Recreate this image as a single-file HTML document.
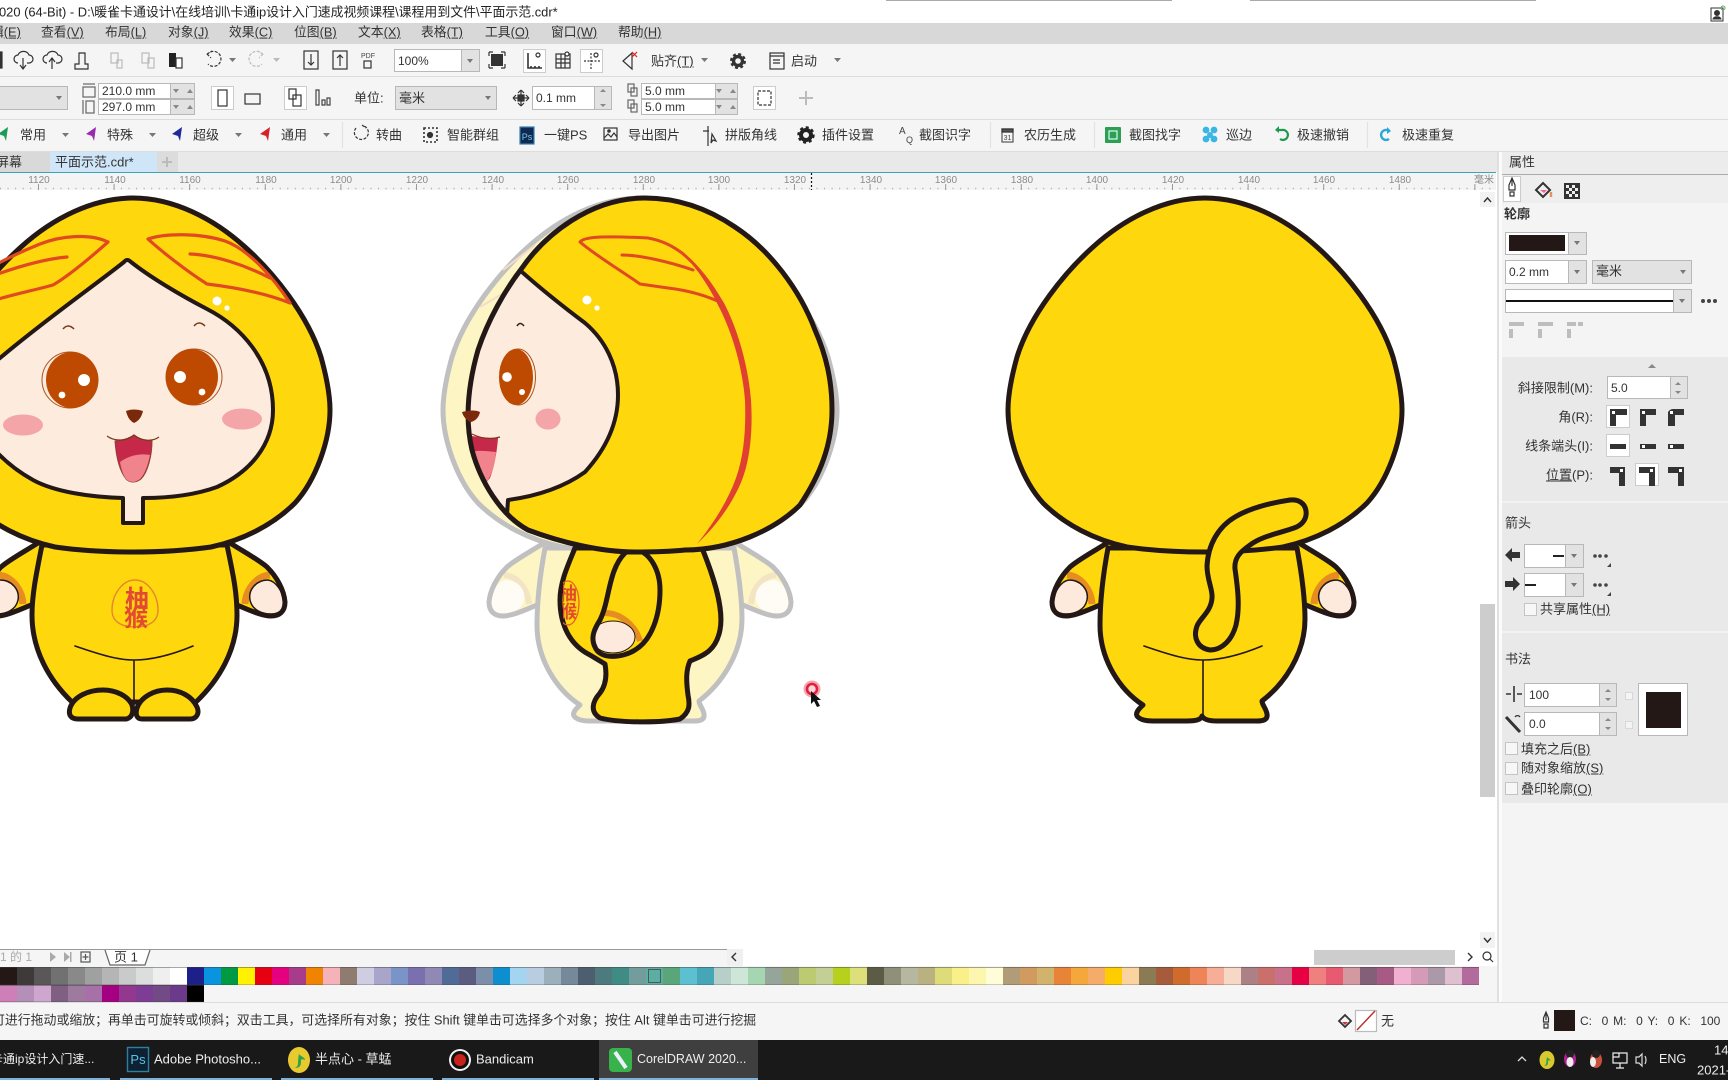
<!DOCTYPE html>
<html lang="zh"><head><meta charset="utf-8"><title>CorelDRAW 2020</title>
<style>
html,body{margin:0;padding:0;background:#fff}
body{position:relative;width:1728px;height:1080px;overflow:hidden;font-family:"Liberation Sans","Noto Sans CJK SC",sans-serif;color:#333}
.a{position:absolute}
.t{position:absolute;white-space:nowrap;transform:translateY(-50%);font-size:13px;line-height:1;color:#333}
.in{position:absolute;background:#fff;border:1px solid #b8b8b8;box-sizing:border-box}
.g{position:absolute;background:#e2e2e2;border:1px solid #b8b8b8;box-sizing:border-box}
.ar{position:absolute;width:0;height:0;border-left:3.5px solid transparent;border-right:3.5px solid transparent;border-top:4px solid #777}
.w{color:#eee;font-size:13px}
.pal{position:absolute;display:flex;left:0;height:18px;box-sizing:border-box}
.pal i{display:block;width:17px;height:100%;flex:none;box-shadow:inset 0 1px 0 rgba(60,60,60,.45),inset 0 -1px 0 rgba(60,60,60,.25)}
.line{position:absolute;background:#dcdcdc}
.cb{position:absolute;width:13px;height:13px;background:#f7f7f7;border:1px solid #c4c4c4;box-sizing:border-box}
u{text-decoration:underline}
</style></head><body>

<!-- backgrounds -->
<div class="a" style="left:0;top:0;width:1728px;height:23px;background:#fff"></div>
<div class="a" style="left:886px;top:0;width:286px;height:1px;background:#aaa"></div>
<div class="a" style="left:1250px;top:0;width:286px;height:1px;background:#aaa"></div>
<div class="a" style="left:0;top:23px;width:1728px;height:21px;background:#d8d8d8"></div>
<div class="a" style="left:0;top:44px;width:1728px;height:108px;background:#f5f5f5"></div>
<div class="line" style="left:0;top:76px;width:1728px;height:1px"></div>
<div class="line" style="left:0;top:119px;width:1728px;height:1px"></div>
<div class="line" style="left:0;top:151px;width:1728px;height:1px"></div>
<div class="a" style="left:0;top:152px;width:1498px;height:20px;background:#e9e9e9"></div>
<div class="a" style="left:0;top:152px;width:50px;height:20px;background:#d9d9d9"></div>
<div class="a" style="left:50px;top:152px;width:107px;height:20px;background:#cfe5f8"></div>
<div class="a" style="left:157px;top:152px;width:21px;height:20px;background:#dcdcdc"></div>
<div class="a" style="left:0;top:172px;width:1496px;height:1px;background:#3fa3b8"></div>
<div class="a" style="left:0;top:173px;width:1496px;height:17px;background:#f4f4f4"></div>
<div class="a" style="left:0;top:190px;width:1498px;height:760px;background:#fff"></div>

<!-- artwork -->
<svg class="a" style="left:0;top:0" width="1728" height="1080" viewBox="0 0 1728 1080">
<defs>
<path id="hd" d="M0,198 C40,198 80,218 112,247 C140,272 175,315 188,357 C193,375 197,393 197,410 C197,440 183,480 162,503 C140,525 110,540 78,547 C50,551 25,552 0,552 C-25,552 -50,551 -78,547 C-110,540 -140,525 -162,503 C-183,480 -197,440 -197,410 C-197,393 -193,375 -188,357 C-175,315 -140,272 -112,247 C-80,218 -40,198 0,198Z"/>
<path id="arm" d="M96,543 C112,553 125,560 133,567 C143,577 150,590 151,602 C151,612 145,616 137,616 C128,616 115,610 103,605"/>
<path id="armf" d="M90,538 L96,543 C112,553 125,560 133,567 C143,577 150,590 151,602 C151,612 145,616 137,616 C128,616 115,610 103,605 L80,600Z"/>
<path id="hand" d="M116,600 C114,590 122,580 134,580 C142,581 149,592 150,602 C150,611 144,614 137,614 C128,614 118,610 116,600Z"/>
<path id="cuff" d="M136,575 C122,576 112,590 111,604"/>
<path id="bback" d="M-95,548 C-100,575 -103,600 -103,625 C-103,660 -83,690 -60,705 C-63,708 -68,712 -66,716 C-63,720 -56,721 -50,721 L-16,721 C-8,721 -2,720 -1,716 C1,720 8,721 14,721 L54,721 C60,721 65,720 64,714 C63,708 59,705 59,701 C80,685 102,655 102,619 C102,595 98,570 94,548Z"/>
<clipPath id="cl1"><path d="M635,552 L528,530 C500,515 480,480 472,450 C465,420 468,385 478,350 C488,320 505,290 522,268 L640,268Z"/></clipPath>
<clipPath id="cl2"><rect x="563" y="570" width="30" height="70"/></clipPath>
<clipPath id="cl3"><path d="M637,550 C650,553 660,570 660,590 C660,615 652,640 635,650 C622,658 600,660 595,647 C590,637 595,628 600,620 C610,600 608,570 625,553Z"/></clipPath>
</defs>

<!-- FRONT -->
<g stroke="#231815" stroke-width="5" fill="#ffd70d" stroke-linejoin="round" stroke-linecap="round">
 <g transform="translate(134,0)">
  <g><use href="#armf" stroke="none"/><use href="#cuff" fill="none" stroke="#e68d22" stroke-width="7" stroke-linecap="butt"/><use href="#hand" fill="#fdeadd" stroke-width="1.5"/><use href="#arm" fill="none"/></g>
  <g transform="scale(-1,1)"><use href="#armf" stroke="none"/><use href="#cuff" fill="none" stroke="#e68d22" stroke-width="7" stroke-linecap="butt"/><use href="#hand" fill="#fdeadd" stroke-width="1.5"/><use href="#arm" fill="none"/></g>
  <path d="M-92,545 C-98,575 -102,595 -102,615 C-102,650 -85,680 -62,702 L62,702 C85,680 103,650 103,615 C103,590 98,570 93,545Z"/>
  <path d="M-59,646 C-30,656 -15,660 0,660 C15,660 35,656 59,646 M0,660 L0,705" fill="none" stroke-width="1.6"/>
  <path d="M-64,708 C-60,696 -45,690 -31,690 C-18,690 -6,696 -2,705 C0,712 -2,718 -8,719 L-56,719 C-63,719 -66,715 -64,708Z"/>
  <path d="M3,708 C7,697 20,690 33,690 C46,690 58,696 63,707 C66,714 62,719 56,719 L8,719 C3,719 1,715 3,708Z"/>
 </g>
 <use href="#hd" transform="translate(133,0)"/>
 <path d="M124,262 Q127,258 131,262 C150,277 180,295 207,309 C240,326 273,360 273,410 C273,445 250,472 217,487 C195,495 170,498 143,498 L143,523 L123,523 L123,498 C90,497 55,492 33,480 C15,470 -5,455 -20,430 C-30,405 -30,385 -20,375 C-10,365 -5,362 0,358 C45,320 95,285 124,262Z" fill="#fdebde" stroke-width="4"/>
</g>
<g fill="none" stroke="#e04a20" stroke-width="3.2" stroke-linejoin="round" stroke-linecap="round">
 <path d="M148,239 C165,233 200,233 225,241 C250,250 275,280 290,303 C270,295 240,288 207,284 C185,270 160,250 148,239Z"/>
 <path d="M190,254 C215,255 245,265 270,278"/>
 <path d="M108,242 C90,233 60,236 40,244 C25,250 10,257 -5,265 M108,242 C90,258 70,275 53,285 C35,290 15,294 -5,300"/>
 <path d="M67,257 C45,259 20,266 -5,275"/>
</g>
<circle cx="217" cy="301" r="4.5" fill="#fff"/><circle cx="227" cy="308" r="2.6" fill="#fff"/>
<ellipse cx="70" cy="380" rx="28" ry="28" fill="none" stroke="#a9541e" stroke-width="1"/>
<ellipse cx="72" cy="380" rx="26" ry="28" fill="#bd4a00"/>
<circle cx="84" cy="380" r="6" fill="#fff"/><circle cx="62" cy="395" r="3.4" fill="#fff"/>
<ellipse cx="194" cy="377" rx="28" ry="28" fill="none" stroke="#a9541e" stroke-width="1"/>
<ellipse cx="192" cy="377" rx="26" ry="28" fill="#bd4a00"/>
<circle cx="180" cy="377" r="6" fill="#fff"/><circle cx="202" cy="392" r="3.4" fill="#fff"/>
<ellipse cx="23" cy="425" rx="20" ry="10.5" fill="#f4a5a8"/><ellipse cx="242" cy="419" rx="20" ry="10.5" fill="#f4a5a8"/>
<path d="M63,329 Q68,323 74,329 M194,326 Q199,320 205,326" fill="none" stroke="#7a3a1a" stroke-width="1.6"/>
<path d="M126,411 Q134,408 143,411 Q141,420 134,423 Q128,420 126,411Z" fill="#7a2a0a"/>
<path d="M115,441 C125,440 129,438 134,435 C138,438 144,441 152,441 C152,455 148,472 141,479 C136,483 130,483 126,479 C119,470 116,455 115,441Z" fill="#c6284a" stroke="#8c4030" stroke-width="1"/>
<path d="M120,462 C128,456 140,453 150,455 C148,465 145,473 141,478 C136,483 130,483 126,479 C123,475 121,468 120,462Z" fill="#f0838b"/>
<path d="M107,436 C115,442 127,441 134,435 C141,441 152,442 159,437" fill="none" stroke="#7a3a1a" stroke-width="1.2"/>
<path d="M135,580 C148,580 158,595 158,610 C158,622 148,627 135,627 C122,627 112,622 112,610 C112,595 122,580 135,580Z" fill="none" stroke="#e8862c" stroke-width="1.4"/>
<text x="137" y="607" text-anchor="middle" font-size="24" font-weight="700" fill="#e24a32" font-family="'Noto Sans CJK SC',sans-serif">柚</text>
<text x="136" y="626" text-anchor="middle" font-size="24" font-weight="700" fill="#e24a32" font-family="'Noto Sans CJK SC',sans-serif">猴</text>

<!-- SIDE: ghost -->
<g stroke="#c0c0c0" stroke-width="5" fill="#fdf5c4" stroke-linejoin="round" stroke-linecap="round">
 <g transform="translate(640,0)">
  <g><use href="#armf" stroke="none"/><use href="#cuff" fill="none" stroke="#f3e5c4" stroke-width="6" stroke-linecap="butt"/><use href="#hand" fill="#fffbf5" stroke="none"/><use href="#arm" fill="none"/></g>
  <g transform="scale(-1,1)"><use href="#armf" stroke="none"/><use href="#cuff" fill="none" stroke="#f3e5c4" stroke-width="6" stroke-linecap="butt"/><use href="#hand" fill="#fffbf5" stroke="none"/><use href="#arm" fill="none"/></g>
  <use href="#bback"/>
  <use href="#hd"/>
 </g>
</g>
<path d="M480,307 L512,288 M503,270 L535,245" stroke="#f5dcc8" stroke-width="2" fill="none"/>
<!-- SIDE: main -->
<g stroke="#231815" stroke-width="5" fill="#ffd70d" stroke-linejoin="round" stroke-linecap="round">
 <path d="M575,548 C568,565 560,582 560,600 C560,625 570,645 590,655 L605,664 C607,675 606,685 600,693 C592,702 590,712 600,718 C620,723 660,723 680,719 C690,712 690,705 688,695 C686,680 686,670 690,661 C705,655 716,650 720,630 C724,610 715,580 702,548Z"/>
</g>
<g clip-path="url(#cl2)"><ellipse cx="568" cy="603" rx="11" ry="22" fill="none" stroke="#e8622c" stroke-width="1.3"/>
<text x="568" y="600" text-anchor="middle" font-size="18" font-weight="700" fill="#e24a2c" font-family="'Noto Sans CJK SC',sans-serif">柚</text>
<text x="568" y="618" text-anchor="middle" font-size="18" font-weight="700" fill="#e24a2c" font-family="'Noto Sans CJK SC',sans-serif">猴</text></g>
<path d="M637,550 C650,553 660,570 660,590 C660,615 652,640 635,650 C622,658 600,660 595,647 C590,637 595,628 600,620 C610,600 608,570 625,553 C629,550 633,550 637,550Z" fill="#ffd70d"/>
<g clip-path="url(#cl3)"><path d="M603,613 C620,612 635,625 640,641" fill="none" stroke="#e68d22" stroke-width="6"/><ellipse cx="613" cy="637" rx="22" ry="16" fill="#fdeadd" stroke="#231815" stroke-width="1"/></g>
<path d="M637,550 C650,553 660,570 660,590 C660,615 652,640 635,650 C622,658 600,660 595,647 C590,637 595,628 600,620 C610,600 608,570 625,553 C629,550 633,550 637,550Z" fill="none" stroke="#231815" stroke-width="5" stroke-linejoin="round"/>
<path d="M645,198 C680,198 710,210 735,227 C770,250 800,290 815,330 C826,355 832,380 832,410 C832,445 820,475 800,505 C775,530 730,550 685,550 C665,552 650,552 635,552 C600,552 560,542 528,530 C500,515 480,480 472,450 C465,420 468,385 478,350 C488,320 505,290 522,268 C545,235 590,198 645,198Z" fill="#ffd70d"/>
<path d="M522,272 C540,288 565,308 585,323 C605,340 618,365 618,395 C618,425 605,450 585,472 C560,490 530,497 508,500 L507,515 C500,515 480,480 472,450 C465,420 468,385 478,350 C488,320 505,290 522,272Z" fill="#fdebde"/>
<g clip-path="url(#cl1)">
 <path d="M465,435 C478,437 490,438 498,438 C497,452 494,468 490,478 L480,490 L465,470Z" fill="#c6284a"/>
 <path d="M470,452 C478,450 488,451 496,452 C495,465 492,473 488,480 L480,490 L472,470Z" fill="#f0838b"/>
</g>
<path d="M472,434 C480,438 490,440 500,437" fill="none" stroke="#7a3a1a" stroke-width="1.2"/>
<path d="M522,272 C540,288 565,308 585,323 C605,340 618,365 618,395 C618,425 605,450 585,472 C560,490 530,497 508,500 L507,515" fill="none" stroke="#231815" stroke-width="4" stroke-linejoin="round"/>
<path d="M645,198 C680,198 710,210 735,227 C770,250 800,290 815,330 C826,355 832,380 832,410 C832,445 820,475 800,505 C775,530 730,550 685,550 C665,552 650,552 635,552 C600,552 560,542 528,530 C500,515 480,480 472,450 C465,420 468,385 478,350 C488,320 505,290 522,268 C545,235 590,198 645,198Z" fill="none" stroke="#231815" stroke-width="5"/>
<g fill="none" stroke="#e04a20" stroke-linejoin="round" stroke-linecap="round">
 <path stroke-width="3" d="M580,242 C584,236 610,236 648,238 C665,241 675,248 682,253 C700,268 712,285 722,303 C705,295 685,290 668,288 L640,284 C620,270 595,255 580,242Z"/>
 <path stroke-width="3" d="M622,255 C640,255 670,262 693,270"/>
</g>
<path d="M682,253 C700,268 715,288 724,303 C738,330 748,365 751,400 C753,430 750,460 742,480 C732,505 715,527 697,544 C712,525 727,503 736,478 C744,455 746,430 745,400 C742,365 732,332 718,305 C710,288 697,268 682,253Z" fill="#e04030"/>
<circle cx="587" cy="300" r="4.5" fill="#fff"/><circle cx="597" cy="308" r="2.6" fill="#fff"/>
<ellipse cx="518" cy="377" rx="17.5" ry="28" fill="none" stroke="#a9541e" stroke-width="1"/>
<ellipse cx="516" cy="377" rx="17" ry="28" fill="#bd4a00"/>
<circle cx="507" cy="377" r="4.8" fill="#fff"/><circle cx="522" cy="392" r="3" fill="#fff"/>
<ellipse cx="548" cy="419" rx="12.5" ry="10.5" fill="#f4a5a8"/>
<path d="M517,326 Q520,321 524,326" fill="none" stroke="#3a2010" stroke-width="1.6"/>
<path d="M462,412 C470,410 476,410 480,412 C479,418 474,422 470,422 C466,420 463,416 462,412Z" fill="#7a2a0a"/>

<!-- BACK -->
<g stroke="#231815" stroke-width="5" fill="#ffd70d" stroke-linejoin="round" stroke-linecap="round">
 <g transform="translate(1203,0)">
  <g><use href="#armf" stroke="none"/><use href="#cuff" fill="none" stroke="#e68d22" stroke-width="7" stroke-linecap="butt"/><use href="#hand" fill="#fdeadd" stroke-width="1.5"/><use href="#arm" fill="none"/></g>
  <g transform="scale(-1,1)"><use href="#armf" stroke="none"/><use href="#cuff" fill="none" stroke="#e68d22" stroke-width="7" stroke-linecap="butt"/><use href="#hand" fill="#fdeadd" stroke-width="1.5"/><use href="#arm" fill="none"/></g>
  <use href="#bback"/>
  <path d="M-59,646 C-30,656 -15,660 0,660 C15,660 35,656 59,646 M0,660 L0,716" fill="none" stroke-width="1.6"/>
 </g>
 <use href="#hd" transform="translate(1205,0)"/>
 <path d="M1290,500 C1270,503 1250,508 1235,517 C1218,527 1208,545 1207,566 C1207,580 1213,590 1212,598 C1211,612 1200,618 1197,626 C1193,637 1197,648 1210,650 C1222,650 1232,640 1236,625 C1240,608 1238,590 1235,569 C1234,558 1240,552 1250,545 C1262,536 1280,533 1294,528 C1303,525 1307,518 1306,511 C1305,503 1298,499 1290,500Z"/>
</g>

<!-- cursor -->
<circle cx="812" cy="689" r="8.5" fill="#f5a5ad"/><circle cx="812" cy="689" r="5" fill="#fbd5d8" stroke="#e0203e" stroke-width="2.6"/>
<path d="M811,691 L811,704 L814,701 L817,707 L820,706 L817,700 L821,700Z" fill="#111"/>
</svg>

<!-- scrollbars / panel -->
<div class="a" style="left:1480px;top:604px;width:15px;height:193px;background:#cdcdcd"></div>
<div class="a" style="left:0;top:949px;width:727px;height:17px;background:#f5f5f5;border-top:1px solid #999;box-sizing:border-box"></div>
<div class="a" style="left:727px;top:949px;width:16px;height:17px;background:#f0f0f0"></div>
<div class="a" style="left:1314px;top:950px;width:141px;height:15px;background:#cdcdcd"></div>
<div class="a" style="left:0;top:966px;width:1498px;height:36px;background:#f5f5f5"></div>
<div class="a" style="left:1497px;top:152px;width:2px;height:850px;background:#e0e0e0"></div>
<div class="a" style="left:1499px;top:152px;width:3px;height:850px;background:#fbfbfb"></div>
<div class="a" style="left:1502px;top:152px;width:226px;height:850px;background:#f4f4f4"></div>
<div class="a" style="left:1502px;top:152px;width:226px;height:23px;background:#ececec"></div>
<div class="a" style="left:1502px;top:174px;width:226px;height:1px;background:#aaa"></div>
<div class="a" style="left:1502px;top:175px;width:226px;height:28px;background:#eeeeee"></div>
<div class="a" style="left:1502px;top:357px;width:226px;height:446px;background:#e9e9e9"></div>
<div class="line" style="left:1502px;top:501px;width:226px;height:2px;background:#f2f2f2"></div>
<div class="line" style="left:1502px;top:631px;width:226px;height:2px;background:#f2f2f2"></div>

<!-- palette -->
<div class="pal" style="top:967px"><i style="background:#231815"></i><i style="background:#3e3a39"></i><i style="background:#595757"></i><i style="background:#727171"></i><i style="background:#898989"></i><i style="background:#9fa0a0"></i><i style="background:#b5b5b6"></i><i style="background:#c9caca"></i><i style="background:#dcdddd"></i><i style="background:#efefef"></i><i style="background:#fff"></i><i style="background:#1d2088"></i><i style="background:#0a94e0"></i><i style="background:#009944"></i><i style="background:#fff100"></i><i style="background:#e60012"></i><i style="background:#e4007f"></i><i style="background:#a73d8a"></i><i style="background:#f08300"></i><i style="background:#f5b2b8"></i><i style="background:#8f7b70"></i><i style="background:#cfcde2"></i><i style="background:#a9a4c9"></i><i style="background:#7b94c8"></i><i style="background:#7a70b0"></i><i style="background:#9089b5"></i><i style="background:#4f6b96"></i><i style="background:#5b5c80"></i><i style="background:#7b8eaa"></i><i style="background:#0d8ecf"></i><i style="background:#a3d4f0"></i><i style="background:#b8cde0"></i><i style="background:#9cb0bc"></i><i style="background:#75899a"></i><i style="background:#4d5e6e"></i><i style="background:#4d7a7c"></i><i style="background:#3f8c85"></i><i style="background:#739c9c"></i><i style="background:#5baea4;outline:1px solid #555;outline-offset:-3px"></i><i style="background:#5aa67b"></i><i style="background:#5cc0d0"></i><i style="background:#46a6b8"></i><i style="background:#b6cfc8"></i><i style="background:#cde6d7"></i><i style="background:#a5d6b1"></i><i style="background:#95a59a"></i><i style="background:#9ba57a"></i><i style="background:#bccb71"></i><i style="background:#c3cf95"></i><i style="background:#b5d11d"></i><i style="background:#dde07a"></i><i style="background:#5c5c46"></i><i style="background:#8f9079"></i><i style="background:#b5b89e"></i><i style="background:#b9b17f"></i><i style="background:#dedb79"></i><i style="background:#f9f08a"></i><i style="background:#fdf6ae"></i><i style="background:#fffcd8"></i><i style="background:#b09d78"></i><i style="background:#d19a60"></i><i style="background:#d1b36c"></i><i style="background:#e98337"></i><i style="background:#f6a73b"></i><i style="background:#f5ac68"></i><i style="background:#ffcc00"></i><i style="background:#fad39f"></i><i style="background:#8c7a54"></i><i style="background:#a65c3c"></i><i style="background:#cf6b2c"></i><i style="background:#ef8458"></i><i style="background:#f6ae96"></i><i style="background:#f7d8c7"></i><i style="background:#ab8186"></i><i style="background:#c9706c"></i><i style="background:#c9708a"></i><i style="background:#e60044"></i><i style="background:#f08080"></i><i style="background:#e85a70"></i><i style="background:#d29aa0"></i><i style="background:#835f78"></i><i style="background:#a65a84"></i><i style="background:#f2b0d0"></i><i style="background:#d49ab8"></i><i style="background:#ab98a8"></i><i style="background:#dec0d0"></i><i style="background:#b36a9c"></i></div>
<div class="pal" style="top:985px;height:17px"><i style="background:#cf7fb8"></i><i style="background:#b490b8"></i><i style="background:#cfa6cd"></i><i style="background:#7f6083"></i><i style="background:#9e7a9e"></i><i style="background:#a870a8"></i><i style="background:#a50082"></i><i style="background:#93378f"></i><i style="background:#7d3c96"></i><i style="background:#724a85"></i><i style="background:#6c3a8a"></i><i style="background:#000"></i></div>

<!-- status + taskbar -->
<div class="a" style="left:0;top:1002px;width:1728px;height:38px;background:#f5f5f5;border-top:1px solid #dcdcdc;box-sizing:border-box"></div>
<div class="a" style="left:0;top:1040px;width:1728px;height:40px;background:#191919"></div>
<div class="a" style="left:599px;top:1040px;width:159px;height:40px;background:#3f3f3f"></div>
<div class="a" style="left:0;top:1078px;width:110px;height:2px;background:#7db2dc"></div>
<div class="a" style="left:120px;top:1078px;width:152px;height:2px;background:#7db2dc"></div>
<div class="a" style="left:281px;top:1078px;width:152px;height:2px;background:#7db2dc"></div>
<div class="a" style="left:442px;top:1078px;width:152px;height:2px;background:#7db2dc"></div>
<div class="a" style="left:599px;top:1078px;width:159px;height:2px;background:#7db2dc"></div>

<!-- toolbar controls -->
<div class="in" style="left:394px;top:49px;width:86px;height:23px"></div><div class="g" style="left:461px;top:49px;width:19px;height:23px"></div><i class="ar" style="left:467px;top:59px"></i>
<div class="g" style="left:-4px;top:86px;width:72px;height:24px"></div><i class="ar" style="left:56px;top:96px"></i>
<div class="in" style="left:98px;top:83px;width:97px;height:16px"></div><div class="in" style="left:98px;top:99px;width:97px;height:16px"></div>
<div class="g" style="left:170px;top:83px;width:25px;height:16px"></div><div class="g" style="left:170px;top:99px;width:25px;height:16px"></div>
<div class="in" style="left:211px;top:86px;width:23px;height:24px;border-color:#ccc"></div>
<div class="in" style="left:284px;top:86px;width:23px;height:24px;border-color:#ccc"></div>
<div class="g" style="left:395px;top:86px;width:102px;height:24px"></div><i class="ar" style="left:485px;top:96px"></i>
<div class="in" style="left:532px;top:86px;width:80px;height:24px"></div><div class="g" style="left:594px;top:86px;width:18px;height:24px"></div>
<div class="in" style="left:641px;top:83px;width:97px;height:16px"></div><div class="in" style="left:641px;top:99px;width:97px;height:16px"></div>
<div class="g" style="left:715px;top:83px;width:23px;height:16px"></div><div class="g" style="left:715px;top:99px;width:23px;height:16px"></div>
<div class="in" style="left:753px;top:86px;width:23px;height:24px;border-color:#ccc"></div>
<div class="in" style="left:523px;top:49px;width:23px;height:24px;border-color:#ccc"></div>
<div class="in" style="left:580px;top:49px;width:23px;height:24px;border-color:#ccc"></div>

<!-- panel controls -->
<div class="in" style="left:1503px;top:176px;width:18px;height:26px;border-color:#ccc"></div>
<div class="in" style="left:1505px;top:232px;width:82px;height:23px"></div><div class="a" style="left:1509px;top:235px;width:56px;height:16px;background:#231815"></div><div class="g" style="left:1568px;top:232px;width:19px;height:23px"></div><i class="ar" style="left:1574px;top:241px"></i>
<div class="in" style="left:1505px;top:260px;width:82px;height:24px"></div><div class="g" style="left:1568px;top:260px;width:19px;height:24px"></div><i class="ar" style="left:1574px;top:270px"></i>
<div class="g" style="left:1592px;top:260px;width:100px;height:24px"></div><i class="ar" style="left:1680px;top:270px"></i>
<div class="in" style="left:1505px;top:289px;width:187px;height:24px"></div><div class="a" style="left:1506px;top:300px;width:167px;height:1.5px;background:#111"></div><div class="g" style="left:1673px;top:289px;width:19px;height:24px"></div><i class="ar" style="left:1679px;top:299px"></i>
<div class="in" style="left:1607px;top:376px;width:81px;height:23px"></div><div class="g" style="left:1670px;top:376px;width:18px;height:23px"></div>
<div class="in" style="left:1606px;top:405px;width:24px;height:23px;border-color:#ccc"></div>
<div class="in" style="left:1606px;top:434px;width:24px;height:23px;border-color:#ccc"></div>
<div class="in" style="left:1635px;top:463px;width:24px;height:23px;border-color:#ccc"></div>
<div class="in" style="left:1524px;top:544px;width:60px;height:24px"></div><div class="g" style="left:1565px;top:544px;width:19px;height:24px"></div><i class="ar" style="left:1571px;top:554px"></i>
<div class="in" style="left:1524px;top:573px;width:60px;height:24px"></div><div class="g" style="left:1565px;top:573px;width:19px;height:24px"></div><i class="ar" style="left:1571px;top:583px"></i>
<div class="a" style="left:1553px;top:555px;width:11px;height:2px;background:#222"></div><div class="a" style="left:1525px;top:584px;width:11px;height:2px;background:#222"></div>
<div class="cb" style="left:1524px;top:603px"></div>
<div class="in" style="left:1524px;top:683px;width:93px;height:24px"></div><div class="g" style="left:1599px;top:683px;width:18px;height:24px"></div>
<div class="in" style="left:1524px;top:712px;width:93px;height:24px"></div><div class="g" style="left:1599px;top:712px;width:18px;height:24px"></div>
<div class="a" style="left:1625px;top:692px;width:6px;height:6px;background:#f4f4f4;border:1px solid #d8d8d8"></div>
<div class="a" style="left:1625px;top:721px;width:6px;height:6px;background:#f4f4f4;border:1px solid #d8d8d8"></div>
<div class="in" style="left:1638px;top:683px;width:50px;height:53px"></div><div class="a" style="left:1646px;top:692px;width:35px;height:36px;background:#231815"></div>
<div class="cb" style="left:1505px;top:742px"></div><div class="cb" style="left:1505px;top:762px"></div><div class="cb" style="left:1505px;top:782px"></div>

<!-- icons + ruler -->
<svg class="a" style="left:0;top:0" width="1728" height="1080" viewBox="0 0 1728 1080" fill="none" stroke="#333" stroke-width="1.2" font-family="'Liberation Sans',sans-serif">
<!-- ruler -->
<line x1="0" y1="188.500" x2="1496" y2="188.500" stroke="#aaa" stroke-width="1.500" stroke-dasharray="1 6.56"/>
<line x1="0.5" y1="187" x2="1496" y2="187" stroke="#999" stroke-width="6" stroke-dasharray="1 74.6" stroke-dashoffset="-37.5"/>
<line x1="811.5" y1="173" x2="811.5" y2="190" stroke="#111" stroke-dasharray="2 2"/>
<g fill="#8a8a8a" stroke="none" font-size="10" text-anchor="middle">
<text x="39" y="183">1120</text><text x="115" y="183">1140</text><text x="190" y="183">1160</text><text x="266" y="183">1180</text><text x="341" y="183">1200</text><text x="417" y="183">1220</text><text x="493" y="183">1240</text><text x="568" y="183">1260</text><text x="644" y="183">1280</text><text x="719" y="183">1300</text><text x="795" y="183">1320</text><text x="871" y="183">1340</text><text x="946" y="183">1360</text><text x="1022" y="183">1380</text><text x="1097" y="183">1400</text><text x="1173" y="183">1420</text><text x="1249" y="183">1440</text><text x="1324" y="183">1460</text><text x="1400" y="183">1480</text>
<text x="1484" y="183" font-family="'Noto Sans CJK SC',sans-serif">毫米</text>
</g>
<!-- toolbar 1 -->
<path d="M0,52h2v16h-2z" fill="#333"/>
<g><path d="M18,63a4,4 0 0 1 0,-8a6,6 0 0 1 11,0a4,4 0 0 1 0,8h-2M23,58v11M20,65l3,4 3,-4"/></g>
<path d="M47,63a4,4 0 0 1 0,-8a6,6 0 0 1 11,0a4,4 0 0 1 0,8h-2M52,69v-11M49,62l3,-4 3,4"/>
<path d="M75,69h13v-5h-3v-11h-6v11h-4z"/>
<g stroke="#bbb"><rect x="111" y="53" width="7" height="10"/><rect x="117" y="60" width="5" height="8"/><rect x="142" y="53" width="7" height="10"/><rect x="148" y="58" width="6" height="10"/></g>
<rect x="169" y="53" width="7" height="14" fill="#222" stroke="none"/><rect x="176" y="58" width="6" height="10" fill="#fff"/>
<path d="M207,54l5,-3 M207,54l4,4 M207,55a7.5,7.5 0 1 1 1,9" stroke-dasharray="3 1.5"/><path d="M229,58h7l-3.5,4z" fill="#777" stroke="none"/>
<path d="M263,54l-5,-3 M263,54l-4,4 M263,55a7.5,7.5 0 1 0 -1,9" stroke="#bbb" stroke-dasharray="3 1.5"/><path d="M273,58h7l-3.5,4z" fill="#bbb" stroke="none"/>
<rect x="304" y="51" width="14" height="18"/><path d="M311,54v11M308,62l3,3 3,-3"/>
<rect x="333" y="51" width="14" height="18"/><path d="M340,66v-11M337,58l3,-3 3,3"/>
<text x="368" y="58" font-size="7" fill="#444" stroke="none" text-anchor="middle">PDF</text><rect x="364" y="61" width="7" height="7"/>
<path d="M489,52h4M489,52v4M505,52h-4M505,52v4M489,68h4M489,68v-4M505,68h-4M505,68v-4"/><rect x="491" y="54" width="12" height="12" fill="#333" stroke="none"/>
<path d="M528,53v15h14M531,68v-2M535,68v-2M539,68v-2" stroke-width="1.6"/><circle cx="538" cy="55" r="2"/>
<rect x="556" y="54" width="14" height="14"/><path d="M556,59h14M556,63h14M561,54v14M565,54v14"/><circle cx="567" cy="54" r="2" fill="#fff"/>
<path d="M591,53v16M584,61h16" stroke-dasharray="2 1.5"/><circle cx="596" cy="55" r="2"/>
<path d="M623,61l9,-8v16z"/><path d="M632,52l5,5M637,52l-5,5" stroke="#d22"/>
<path d="M701,58h7l-3.5,4z" fill="#777" stroke="none"/>
<circle cx="738" cy="61" r="4.5" stroke-width="3.4"/><circle cx="738" cy="61" r="7" stroke-width="2" stroke-dasharray="3 2.5"/>
<rect x="770" y="53" width="14" height="16"/><path d="M770,56h14M773,60h7M773,63h7"/>
<path d="M834,58h7l-3.5,4z" fill="#777" stroke="none"/>
<!-- toolbar 2 -->
<rect x="83" y="87" width="12" height="10" stroke="#666"/><path d="M83,84h12" stroke="#666"/><rect x="86" y="101" width="8" height="12" stroke="#666"/><path d="M83,100v14" stroke="#666"/>
<g fill="#888" stroke="none"><path d="M173,89h6l-3,4zM187,93h6l-3,-4zM173,105h6l-3,4zM187,109h6l-3,-4z"/><path d="M716,89h6l-3,4zM730,93h6l-3,-4zM716,105h6l-3,4zM730,109h6l-3,-4z"/><path d="M600,92h6l-3,-3zM600,104h6l-3,3z"/></g>
<rect x="218" y="90" width="9" height="16"/><rect x="245" y="94" width="15" height="10"/>
<rect x="289" y="89" width="7" height="10"/><rect x="293" y="95" width="8" height="11"/>
<path d="M316,90v15h3v-15zM322,100h3v5h-3zM327,98h3v7h-3z" stroke="#444"/>
<path d="M521,90v16M513,98h16M521,90l-3,3M521,90l3,3M521,106l-3,-3M521,106l3,-3M513,98l3,-3M513,98l3,3M529,98l-3,-3M529,98l-3,3"/><rect x="518" y="95" width="6" height="6" fill="#333"/>
<rect x="628" y="84" width="6" height="8" stroke="#666"/><rect x="631" y="88" width="6" height="8" stroke="#666"/><rect x="628" y="100" width="6" height="8" stroke="#666"/><rect x="631" y="104" width="6" height="8" stroke="#666"/>
<rect x="758" y="91" width="13" height="14" stroke-dasharray="3 1.5"/>
<path d="M806,91v14M799,98h14" stroke="#bbb" stroke-width="2"/>
<!-- toolbar 3 -->
<path d="M-2,134l10,-7 -2,14 -2,-5z" fill="#1a9b56" stroke="none"/><path d="M62,133h7l-3.5,4z" fill="#777" stroke="none"/>
<path d="M86,134l10,-7 -2,14 -2,-5z" fill="#9a2ab0" stroke="none"/><path d="M149,133h7l-3.5,4z" fill="#777" stroke="none"/>
<path d="M172,134l10,-7 -2,14 -2,-5z" fill="#1c2a9a" stroke="none"/><path d="M235,133h7l-3.5,4z" fill="#777" stroke="none"/>
<path d="M260,134l10,-7 -2,14 -2,-5z" fill="#d8202c" stroke="none"/><path d="M323,133h7l-3.5,4z" fill="#777" stroke="none"/>
<path d="M342.5,122v26M990.5,122v26M1094.5,122v26M1367.5,122v26" stroke="#e2e2e2"/>
<path d="M356,128a7,7 0 1 0 8,-2M362,125l4,3" stroke-dasharray="3 1.5"/>
<rect x="424" y="128" width="13" height="14" stroke-dasharray="2 2" stroke-width="1.6"/><circle cx="430" cy="135" r="2.5" fill="#333"/>
<rect x="520" y="127" width="14" height="17" fill="#0e2a50" stroke="#3a7fb0"/><text x="527" y="140" font-size="9" fill="#7fc8ee" stroke="none" text-anchor="middle">Ps</text>
<rect x="604" y="128" width="13" height="12"/><path d="M604,138l4,-4 3,3 3,-4 3,4"/><circle cx="609" cy="131" r="1.2" fill="#333"/>
<path d="M708,126v20M703,131h6M712,134l4,7-3,-1-2,3z"/>
<circle cx="806" cy="135" r="5" stroke="#222" stroke-width="4"/><circle cx="806" cy="135" r="7.5" stroke="#222" stroke-width="2.4" stroke-dasharray="3 2.8"/>
<text x="899" y="134" font-size="10" fill="#444" stroke="none">A</text><text x="906" y="143" font-size="9" fill="#444" stroke="none">Q</text>
<rect x="1002" y="129" width="11" height="13" stroke="#555"/><path d="M1002,129h11v3h-11z" fill="#555"/><text x="1007.500" y="140" font-size="7" fill="#444" stroke="none" text-anchor="middle">31</text>
<rect x="1105" y="127" width="16" height="16" rx="1" fill="#2f9e55" stroke="none"/><rect x="1109" y="131" width="8" height="8" stroke="#cfe"/>
<g fill="#39b6e4" stroke="none"><circle cx="1206" cy="130" r="3.4"/><circle cx="1214" cy="130" r="3.4"/><circle cx="1206" cy="139" r="3.4"/><circle cx="1214" cy="139" r="3.4"/><circle cx="1210" cy="135" r="3"/></g>
<path d="M1278,130h4a5,5 0 1 1 -2,9" stroke="#1c9b50" stroke-width="2.2"/><path d="M1279,126v7l-4,-3z" fill="#1c9b50" stroke="none"/>
<path d="M1389,130h-2a5,5 0 1 0 2,9" stroke="#2aa6d8" stroke-width="2.4"/><path d="M1387,127v7l4,-3z" fill="#2aa6d8" stroke="none"/>
<!-- tab plus -->
<path d="M167,157v10M162,162h10" stroke="#bbb" stroke-width="2"/>
<!-- scroll arrows -->
<rect x="1480" y="192" width="15" height="15" fill="#f2f2f2" stroke="none"/><path d="M1484,202l3.500,-4 3.500,4" stroke-width="1.400"/>
<rect x="1480" y="932" width="15" height="16" fill="#f2f2f2" stroke="none"/><path d="M1484,938l3.500,4 3.500,-4" stroke-width="1.400"/>
<path d="M736,953l-4,4 4,4M1468,953l4,4 -4,4" stroke-width="1.400"/>
<circle cx="1487" cy="956" r="4"/><path d="M1490,959l3,3"/>
<!-- page nav -->
<g fill="#aaa" stroke="none"><path d="M50,952l6,5 -6,5zM64,952l6,5 -6,5z"/><rect x="70" y="952" width="1.500" height="10"/></g>
<rect x="81" y="952" width="9" height="10" stroke="#555"/><path d="M85.500,954v6M82.500,957h6" stroke="#555"/>
<path d="M105,950l5,15h35l5,-15" stroke="#666" fill="#fff"/>
<!-- panel icons -->
<path d="M1512,178l3,7v5h-6v-5zM1512,178v8M1510,192h4v4h-4z"/>
<path d="M1543,183l7,7-7,7-7,-7z" stroke-width="2"/><path d="M1540,190h7l-3,3z" fill="#e69" stroke="none"/><path d="M1551,192v5" stroke="#e8905a" stroke-width="2.4"/>
<path d="M1564,183h16v16h-16z" fill="#333" stroke="none"/><g fill="#eee" stroke="none"><rect x="1566" y="185" width="3" height="3"/><rect x="1572" y="185" width="3" height="3"/><rect x="1569" y="188" width="3" height="3"/><rect x="1575" y="188" width="3" height="3"/><rect x="1566" y="191" width="3" height="3"/><rect x="1572" y="191" width="3" height="3"/><rect x="1569" y="194" width="3" height="3"/><rect x="1575" y="194" width="3" height="3"/></g>
<g fill="#bdbdbd" stroke="none"><rect x="1509" y="322" width="15" height="4"/><rect x="1509" y="329" width="4" height="9"/><rect x="1538" y="322" width="15" height="4"/><rect x="1538" y="329" width="4" height="9"/><rect x="1567" y="322" width="9" height="4"/><rect x="1578" y="322" width="5" height="4"/><rect x="1567" y="329" width="4" height="9"/></g>
<g fill="#444" stroke="none"><circle cx="1703" cy="301" r="2"/><circle cx="1709" cy="301" r="2"/><circle cx="1715" cy="301" r="2"/></g>
<path d="M1648,368l4,-4 4,4z" fill="#888" stroke="none"/>
<path d="M1675,385h6l-3,-3zM1675,391h6l-3,3z" fill="#888" stroke="none"/>
<g fill="#333" stroke="none">
 <path d="M1610,409h17v6h-11v11h-6z"/><path d="M1640,409h16v6h-10v11h-6v-13z"/><path d="M1668,412q2,-3 5,-3h11v6h-9v11h-7z"/>
 <rect x="1610" y="444" width="16" height="5"/><path d="M1640,444h16v5h-16zM1668,444h16v5h-16z"/>
 <path d="M1610,467h15v19h-6v-13h-9z"/><path d="M1639,467h16v19h-6v-13h-10z"/><path d="M1668,467h16v19h-6v-13h-10z"/>
</g>
<g fill="#fff" stroke="none"><rect x="1612" y="411" width="3" height="3"/><rect x="1642" y="411" width="3" height="3"/><rect x="1670" y="411" width="3" height="3"/><rect x="1620" y="469" width="3" height="3"/><rect x="1650" y="469" width="3" height="3"/><rect x="1679" y="469" width="3" height="3"/><rect x="1642" y="445" width="3" height="3"/><rect x="1670" y="445" width="3" height="3"/></g>
<path d="M1505,555l7,-7v4h8v6h-8v4z" fill="#333" stroke="none"/><path d="M1520,584l-7,-7v4h-8v6h8v4z" fill="#333" stroke="none"/>
<g fill="#444" stroke="none"><circle cx="1595" cy="556" r="1.800"/><circle cx="1600" cy="556" r="1.800"/><circle cx="1606" cy="556" r="1.800"/><circle cx="1595" cy="585" r="1.800"/><circle cx="1600" cy="585" r="1.800"/><circle cx="1606" cy="585" r="1.800"/><path d="M1611,563v4h-4zM1611,592v4h-4z"/></g>
<path d="M1514,686v16M1506,694h5M1517,694h5" stroke-width="1.600"/>
<path d="M1506,717l14,15" stroke-width="3"/><path d="M1515,717a3,3 0 0 1 5,0"/>
<path d="M1605,692h6l-3,-3zM1605,698h6l-3,3zM1605,721h6l-3,-3zM1605,727h6l-3,3z" fill="#888" stroke="none"/>
<!-- status -->
<path d="M1345,1015l6,6-6,6-6,-6z" stroke-width="1.800"/><path d="M1342,1022h6l-3,3z" fill="#c33" stroke="none"/>
<rect x="1355.500" y="1010.500" width="21" height="21" fill="#fff" stroke="#bbb"/><path d="M1357,1030l18,-19" stroke="#b33" stroke-width="1.500"/>
<path d="M1546,1012l2.500,6v4h-5v-4zM1546,1012v8M1544,1024h4v4h-4z"/><rect x="1554" y="1010" width="21" height="21" fill="#231815" stroke="none"/>
<!-- taskbar icons -->
<rect x="127.500" y="1047.500" width="21" height="24" fill="#0c2233" stroke="#2e7fa0" stroke-width="1.400"/><text x="138" y="1064" font-size="13" fill="#5bc0ea" stroke="none" text-anchor="middle">Ps</text>
<ellipse cx="299" cy="1060" rx="11" ry="13" fill="#e8c930" stroke="none"/><path d="M294,1068c6,-1 3,-6 5,-14c2,3 6,3 6,6c-2,-1 -3,-1 -4,0c0,5 0,8 -7,8z" fill="#2aa34a" stroke="none"/>
<circle cx="460" cy="1060" r="11" fill="#f2f2f2" stroke="none"/><circle cx="460" cy="1060" r="9" fill="#111" stroke="none"/><circle cx="460" cy="1060" r="6" fill="#c8221c" stroke="none"/>
<rect x="609" y="1048" width="23" height="24" rx="4" fill="#38b24a" stroke="none"/><path d="M615,1052l11,16" stroke="#eef" stroke-width="4"/>
<!-- tray -->
<path d="M1518,1061l4,-4 4,4" stroke="#ddd" stroke-width="1.300"/>
<ellipse cx="1547" cy="1060" rx="7.500" ry="9" fill="#d9c92e" stroke="none"/><path d="M1544,1066c3,-1 2,-5 3,-9 2,2 3,2 4,4-2,-1-2,-1-3,0 0,3 0,5-4,5z" fill="#2aa34a" stroke="none"/>
<ellipse cx="1570" cy="1059" rx="6" ry="8" fill="#b02090" stroke="none"/><circle cx="1570" cy="1054" r="4" fill="#222" stroke="none"/><ellipse cx="1570" cy="1062" rx="3.500" ry="5" fill="#eee" stroke="none"/>
<ellipse cx="1596" cy="1060" rx="6" ry="8" fill="#c9513a" stroke="none"/><circle cx="1596" cy="1054" r="4" fill="#222" stroke="none"/><ellipse cx="1593" cy="1062" rx="3" ry="5" fill="#eee" stroke="none"/>
<path d="M1613,1053h14v10h-14zM1620,1063v5M1616,1068h8M1613,1053h6v4h-6z" stroke="#eee"/>
<path d="M1636,1057h3l3,-3v12l-3,-3h-3zM1645,1056q2,4 0,8" stroke="#ddd"/>
</svg>

<!-- text -->
<span class="t" style="left:-1px;top:13px;font-size:12.9px;color:#222">020 (64-Bit) - D:\暖雀卡通设计\在线培训\卡通ip设计入门速成视频课程\课程用到文件\平面示范.cdr*</span>
<span class="t" style="left:-9px;top:33px;font-size:12.8px">辑<u>(E)</u></span>
<span class="t" style="left:41px;top:33px;font-size:12.8px">查看<u>(V)</u></span>
<span class="t" style="left:105px;top:33px;font-size:12.8px">布局<u>(L)</u></span>
<span class="t" style="left:168px;top:33px;font-size:12.8px">对象<u>(J)</u></span>
<span class="t" style="left:229px;top:33px;font-size:12.8px">效果<u>(C)</u></span>
<span class="t" style="left:294px;top:33px;font-size:12.8px">位图<u>(B)</u></span>
<span class="t" style="left:358px;top:33px;font-size:12.8px">文本<u>(X)</u></span>
<span class="t" style="left:421px;top:33px;font-size:12.8px">表格<u>(T)</u></span>
<span class="t" style="left:485px;top:33px;font-size:12.8px">工具<u>(O)</u></span>
<span class="t" style="left:551px;top:33px;font-size:12.8px">窗口<u>(W)</u></span>
<span class="t" style="left:618px;top:33px;font-size:12.8px">帮助<u>(H)</u></span>
<span class="t" style="left:398px;top:61px;font-size:12px">100%</span>
<span class="t" style="left:651px;top:61px">贴齐<u>(T)</u></span>
<span class="t" style="left:791px;top:61px">启动</span>
<span class="t" style="left:102px;top:91px;font-size:12px">210.0 mm</span>
<span class="t" style="left:102px;top:107px;font-size:12px">297.0 mm</span>
<span class="t" style="left:354px;top:98px">单位:</span>
<span class="t" style="left:399px;top:98px">毫米</span>
<span class="t" style="left:536px;top:98px;font-size:12px">0.1 mm</span>
<span class="t" style="left:645px;top:91px;font-size:12px">5.0 mm</span>
<span class="t" style="left:645px;top:107px;font-size:12px">5.0 mm</span>
<span class="t" style="left:20px;top:135px">常用</span><span class="t" style="left:107px;top:135px">特殊</span><span class="t" style="left:193px;top:135px">超级</span><span class="t" style="left:281px;top:135px">通用</span>
<span class="t" style="left:376px;top:135px">转曲</span><span class="t" style="left:447px;top:135px">智能群组</span><span class="t" style="left:544px;top:135px">一键PS</span><span class="t" style="left:628px;top:135px">导出图片</span><span class="t" style="left:725px;top:135px">拼版角线</span><span class="t" style="left:822px;top:135px">插件设置</span><span class="t" style="left:919px;top:135px">截图识字</span><span class="t" style="left:1024px;top:135px">农历生成</span><span class="t" style="left:1129px;top:135px">截图找字</span><span class="t" style="left:1226px;top:135px">巡边</span><span class="t" style="left:1297px;top:135px">极速撤销</span><span class="t" style="left:1402px;top:135px">极速重复</span>
<span class="t" style="left:-4px;top:162px">屏幕</span>
<span class="t" style="left:55px;top:162px">平面示范.cdr*</span>
<span class="t" style="left:1509px;top:162px">属性</span>
<span class="t" style="left:1504px;top:214px;font-weight:700">轮廓</span>
<span class="t" style="left:1509px;top:272px;font-size:12px">0.2 mm</span>
<span class="t" style="left:1596px;top:271px">毫米</span>
<span class="t" style="left:1611px;top:388px;font-size:12px">5.0</span>
<span class="t" style="right:135px;top:388px">斜接限制(M):</span>
<span class="t" style="right:135px;top:417px">角(R):</span>
<span class="t" style="right:135px;top:446px">线条端头(I):</span>
<span class="t" style="right:135px;top:475px"><u>位置</u>(P):</span>
<span class="t" style="left:1505px;top:523px">箭头</span>
<span class="t" style="left:1540px;top:609px">共享属性<u>(H)</u></span>
<span class="t" style="left:1505px;top:659px">书法</span>
<span class="t" style="left:1529px;top:695px;font-size:12px">100</span>
<span class="t" style="left:1529px;top:724px;font-size:12px">0.0</span>
<span class="t" style="left:1521px;top:749px">填充之后<u>(B)</u></span>
<span class="t" style="left:1521px;top:768px">随对象缩放<u>(S)</u></span>
<span class="t" style="left:1521px;top:789px">叠印轮廓<u>(O)</u></span>
<span class="t" style="left:0;top:957px;font-size:12px;color:#aaa">1 的 1</span>
<span class="t" style="left:114px;top:957px">页 1</span>
<span class="t" style="left:-8px;top:1021px;font-size:12.9px">可进行拖动或缩放；再单击可旋转或倾斜；双击工具，可选择所有对象；按住 Shift 键单击可选择多个对象；按住 Alt 键单击可进行挖掘</span>
<span class="t" style="left:1381px;top:1021px">无</span>
<span class="t" style="left:1580px;top:1021px;font-size:12px;word-spacing:1.500px">C: &nbsp;0 M: &nbsp;0 Y: &nbsp;0 K: &nbsp;100</span>
<span class="t w" style="left:-9px;top:1059px;font-size:12px">卡通ip设计入门速...</span>
<span class="t w" style="left:154px;top:1059px">Adobe Photosho...</span>
<span class="t w" style="left:315px;top:1059px">半点心 - 草蜢</span>
<span class="t w" style="left:476px;top:1059px">Bandicam</span>
<span class="t w" style="left:637px;top:1059px;font-size:12.5px">CorelDRAW 2020...</span>
<span class="t w" style="left:1659px;top:1059px;font-size:12.5px">ENG</span>
<span class="t w" style="left:1714px;top:1050px;font-size:13px">14</span>
<span class="t w" style="left:1697px;top:1070px;font-size:13px">2021-</span>
<svg class="a" style="left:1710px;top:5px" width="16" height="18" fill="none" stroke="#333"><rect x="1" y="3" width="12" height="13"/><circle cx="7" cy="8" r="2.500" fill="#333"/><path d="M3,14c1,-3 7,-3 8,0z" fill="#333"/><circle cx="13" cy="3" r="2" stroke="#6a6"/></svg>
</body></html>
